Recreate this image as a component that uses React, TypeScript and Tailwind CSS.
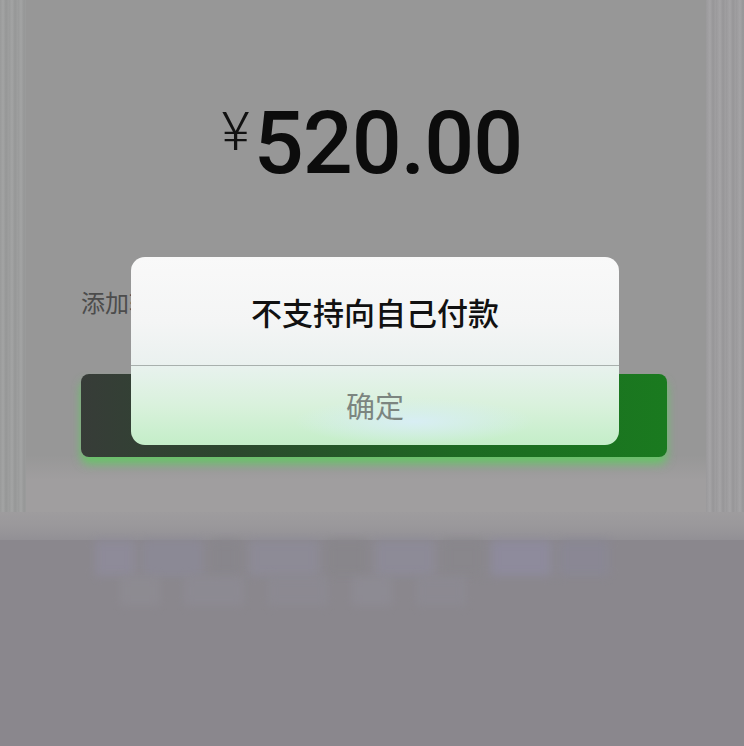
import React from "react";

const cjk = { fontFamily: '"Noto Sans CJK SC", "Noto Sans", sans-serif' };

export default function App() {
  return (
    <div className="relative w-[744px] h-[746px] overflow-hidden bg-[#8a878d]">
      <div className="flex h-[512px]">
        <div className="w-[26px] bg-[repeating-linear-gradient(90deg,#999a9a_0px,#a3a4a4_3px,#969797_6px,#9e9f9f_9px)]" />
        <div className="flex-1 flex flex-col bg-[linear-gradient(180deg,#979797_0px,#979797_455px,#a09e9f_480px,#a09e9f_512px)]">
          <div className="flex items-start justify-center pt-[99px] pl-[12px]">
            <span
              className="text-[54px] leading-none text-[#111] mt-[6px] mr-[4px]"
              style={{ fontFamily: 'Roboto, "Liberation Sans", sans-serif', fontWeight: 300 }}
            >
              ¥
            </span>
            <span
              className="text-[88px] leading-none text-[#0c0c0c] tracking-[-1px]"
              style={{ fontFamily: 'Roboto, "Liberation Sans", sans-serif', fontWeight: 500 }}
            >
              520.00
            </span>
          </div>
          <div className="ml-[55px] mt-[103px] text-[24px] leading-[24px] text-[#4c4c4c]" style={cjk}>
            添加转账说明
          </div>
          <div className="ml-[55px] mr-[39px] mt-[60px] h-[83px] rounded-[8px] bg-[linear-gradient(90deg,#373c38_0%,#2c472e_25%,#1d6a22_65%,#1a7a1f_100%)] shadow-[0_7px_10px_rgba(90,210,90,0.75)]" />
        </div>
        <div className="w-[38px] bg-[repeating-linear-gradient(90deg,#9a999b_0px,#a5a4a6_4px,#979698_7px,#a09fa1_10px)]" />
      </div>
      <div className="h-[28px] bg-[linear-gradient(180deg,#9e9c9e_0%,#9a989b_50%,#929095_100%)]" />
      <div className="flex gap-[8px] px-[95px] h-[36px] blur-[5px] opacity-80">
        <div className="w-[40px] bg-[#8f8c9c]" />
        <div className="w-[60px] bg-[#8c8a98]" />
        <div className="w-[30px] bg-[#88868c]" />
        <div className="w-[70px] bg-[#8e8c99]" />
        <div className="w-[40px] bg-[#88868b]" />
        <div className="w-[60px] bg-[#8e8c9a]" />
        <div className="w-[40px] bg-[#89878c]" />
        <div className="w-[60px] bg-[#8f8ca0]" />
        <div className="w-[50px] bg-[#8a8896]" />
      </div>
      <div className="flex gap-[24px] px-[120px] h-[30px] blur-[5px] opacity-70">
        <div className="w-[40px] bg-[#8f8d94]" />
        <div className="w-[60px] bg-[#8e8c95]" />
        <div className="w-[60px] bg-[#8d8b94]" />
        <div className="w-[40px] bg-[#8f8d96]" />
        <div className="w-[50px] bg-[#8d8b94]" />
      </div>

      <div
        className="absolute left-[131px] top-[257px] w-[488px] h-[188px] rounded-[14px] overflow-hidden flex flex-col"
        style={cjk}
      >
        <div className="h-[108px] flex items-center justify-center bg-[linear-gradient(180deg,#f9f9f9_0%,#f4f5f5_60%,#eaf1ef_100%)]">
          <span className="text-[31px] leading-none text-[#111] font-medium">不支持向自己付款</span>
        </div>
        <div className="h-[1px] bg-[#a8b0ad]" />
        <div className="flex-1 flex items-center justify-center bg-[radial-gradient(ellipse_at_58%_70%,#d8eef4_0%,rgba(216,238,244,0)_30%),linear-gradient(180deg,#e8f2ee_0%,#d9f1dc_50%,#c4eec8_100%)]">
          <span className="text-[29px] leading-none text-[#7c8580]">确定</span>
        </div>
      </div>
    </div>
  );
}
